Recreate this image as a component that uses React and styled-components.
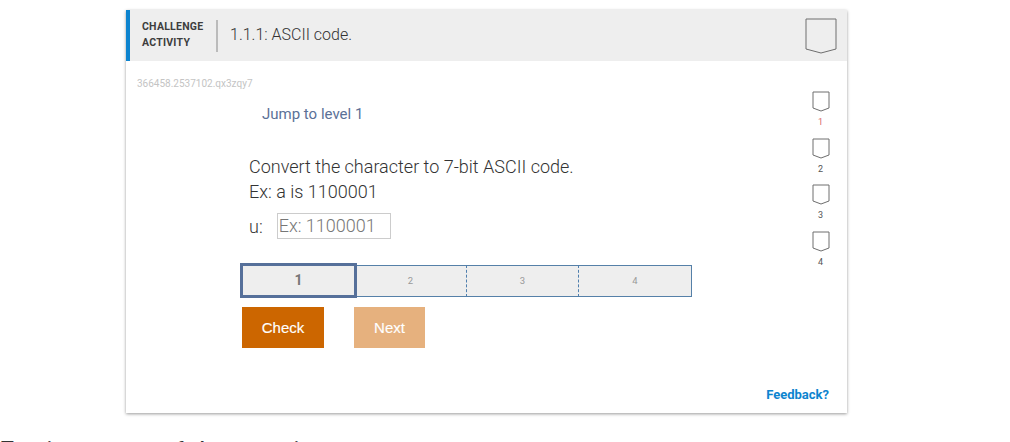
import React from 'react';
import styled, { createGlobalStyle } from 'styled-components';

const GlobalStyle = createGlobalStyle`
  html, body {
    margin: 0;
    padding: 0;
    background: #fff;
    font-family: Roboto, "Helvetica Neue", Arial, sans-serif;
    overflow: hidden;
  }
`;

const Page = styled.div`
  width: 1010px;
  height: 442px;
  overflow: hidden;
  padding-top: 10px;
  box-sizing: border-box;
`;

const Card = styled.section`
  width: 721px;
  height: 403px;
  margin-left: 126px;
  background: #fff;
  box-shadow: 0 1px 3px rgba(0, 0, 0, 0.4);
  display: flex;
  flex-direction: column;
`;

const Header = styled.header`
  height: 51px;
  flex: none;
  background: #eee;
  border-left: 4px solid #0d84cf;
  display: flex;
  align-items: center;
`;

const Kicker = styled.div`
  width: 65px;
  margin: 0 0 2px 12px;
  font-size: 10.5px;
  font-weight: 700;
  line-height: 16px;
  color: #3d3d3d;
  letter-spacing: 0.25px;
`;

const Divider = styled.div`
  width: 2px;
  height: 32px;
  background: #bbb;
  margin-left: 9px;
`;

const Title = styled.h1`
  flex: 1;
  margin: 0 0 2px 12px;
  font-size: 16px;
  font-weight: 300;
  color: #333;
`;

const HeaderBadge = styled.div`
  margin-right: 10px;
  display: flex;
`;

const Body = styled.div`
  flex: 1;
  display: flex;
  position: relative;
`;

const Main = styled.div`
  flex: 1;
  display: flex;
  flex-direction: column;
`;

const Seed = styled.div`
  margin: 17px 0 0 11px;
  font-size: 10px;
  line-height: 11px;
  color: #c4c4c4;
`;

const Jump = styled.div`
  margin: 16px 0 0 136px;
  font-size: 15px;
  line-height: 18px;
  color: #5b7197;
`;

const Prompt = styled.div`
  margin: 31px 0 0 123px;
  font-size: 18px;
  font-weight: 300;
  line-height: 25px;
  color: #333;
`;

const AnswerRow = styled.div`
  margin: 9px 0 0 123px;
  display: flex;
  align-items: center;
  gap: 14px;
  font-size: 18px;
  font-weight: 300;
  color: #333;
`;

const AnswerInput = styled.input`
  width: 114px;
  height: 26px;
  box-sizing: border-box;
  padding: 0 1px 2px;
  border: 1px solid #ccc;
  font: 300 18px Roboto, sans-serif;
  outline: none;
  &::placeholder {
    color: #777;
    opacity: 1;
  }
`;

const Levels = styled.div`
  margin: 24px 0 0 114px;
  width: 452px;
  height: 35px;
  display: flex;
  box-sizing: border-box;
`;

const Level = styled.div`
  box-sizing: border-box;
  display: flex;
  align-items: center;
  justify-content: center;
  background: #eee;
  height: ${(p) => (p.$active ? '35px' : '32px')};
  width: ${(p) => p.$width}px;
  margin-top: ${(p) => (p.$active ? '0' : '2px')};
  padding: ${(p) => (p.$active ? '0 0 1px' : p.$first ? '0 2px 2px 0' : '0 0 2px')};
  border: ${(p) => (p.$active ? '3px solid #56709a' : '1px solid #5580a8')};
  border-left: ${(p) => (p.$active ? '3px solid #56709a' : p.$first ? 'none' : '1px dashed #4f7fae')};
  border-right: ${(p) => (p.$active ? '3px solid #56709a' : p.$last ? '1px solid #5580a8' : 'none')};
  font-size: ${(p) => (p.$active ? '14px' : '9.5px')};
  font-weight: ${(p) => (p.$active ? 700 : 400)};
  color: ${(p) => (p.$active ? '#777' : '#999')};
`;

const Actions = styled.div`
  margin: 9px 0 0 116px;
  display: flex;
  gap: 30px;
`;

const ActionButton = styled.button`
  height: 41px;
  width: ${(p) => p.$width}px;
  padding: 0;
  border: none;
  background: ${(p) => (p.$disabled ? '#e6b17e' : '#cc6600')};
  color: #fff;
  font: 400 15px "Liberation Sans", Arial, sans-serif;
  -webkit-text-stroke: 0.15px #fff;
`;

const Feedback = styled.a`
  position: absolute;
  right: 18px;
  bottom: 11px;
  font-size: 13px;
  font-weight: 700;
  line-height: 14px;
  color: #0d84cf;
`;

const LevelRail = styled.div`
  flex: none;
  width: 27px;
  margin: 30px 13px 0 0;
  display: flex;
  flex-direction: column;
  align-items: center;
`;

const RailItem = styled.div`
  height: 46.67px;
  display: flex;
  flex-direction: column;
  align-items: center;
`;

const RailNumber = styled.div`
  font-size: 9px;
  line-height: 10px;
  margin-top: 5px;
  color: ${(p) => (p.$current ? '#d9686a' : '#555')};
`;

const NextSection = styled.h2`
  margin: 23px 0 0 1px;
  font-size: 21px;
  font-weight: 500;
  line-height: 26px;
  color: #333;
  white-space: nowrap;
`;

const Shield = ({ width, height, tip }) => (
  <svg width={width} height={height} viewBox={`0 0 ${width} ${height}`} fill="none">
    <path
      d={`M1 1H${width - 1}V${height - tip}L${width / 2} ${height - 1}L1 ${height - tip}Z`}
      stroke="#6e6e6e"
      strokeWidth="1"
    />
  </svg>
);

const levelCells = [
  { n: 1, width: 117, active: true },
  { n: 2, width: 109, first: true },
  { n: 3, width: 112 },
  { n: 4, width: 114, last: true },
];

export default function App() {
  return (
    <Page>
      <GlobalStyle />
      <Card>
        <Header>
          <Kicker>CHALLENGE ACTIVITY</Kicker>
          <Divider />
          <Title>1.1.1: ASCII code.</Title>
          <HeaderBadge>
            <Shield width={32} height={36} tip={5} />
          </HeaderBadge>
        </Header>
        <Body>
          <Main>
            <Seed>366458.2537102.qx3zqy7</Seed>
            <Jump>Jump to level 1</Jump>
            <Prompt>
              Convert the character to 7-bit ASCII code.
              <br />
              Ex: a is 1100001
            </Prompt>
            <AnswerRow>
              <span>u:</span>
              <AnswerInput placeholder="Ex: 1100001" />
            </AnswerRow>
            <Levels>
              {levelCells.map((c) => (
                <Level key={c.n} $active={c.active} $first={c.first} $last={c.last} $width={c.width}>
                  {c.n}
                </Level>
              ))}
            </Levels>
            <Actions>
              <ActionButton $width={82}>Check</ActionButton>
              <ActionButton $width={71} $disabled>Next</ActionButton>
            </Actions>
          </Main>
          <LevelRail>
            {[1, 2, 3, 4].map((n) => (
              <RailItem key={n}>
                <Shield width={18} height={21} tip={4} />
                <RailNumber $current={n === 1}>{n}</RailNumber>
              </RailItem>
            ))}
          </LevelRail>
          <Feedback>Feedback?</Feedback>
        </Body>
      </Card>
      <NextSection>Text is sequence of characters in</NextSection>
    </Page>
  );
}
